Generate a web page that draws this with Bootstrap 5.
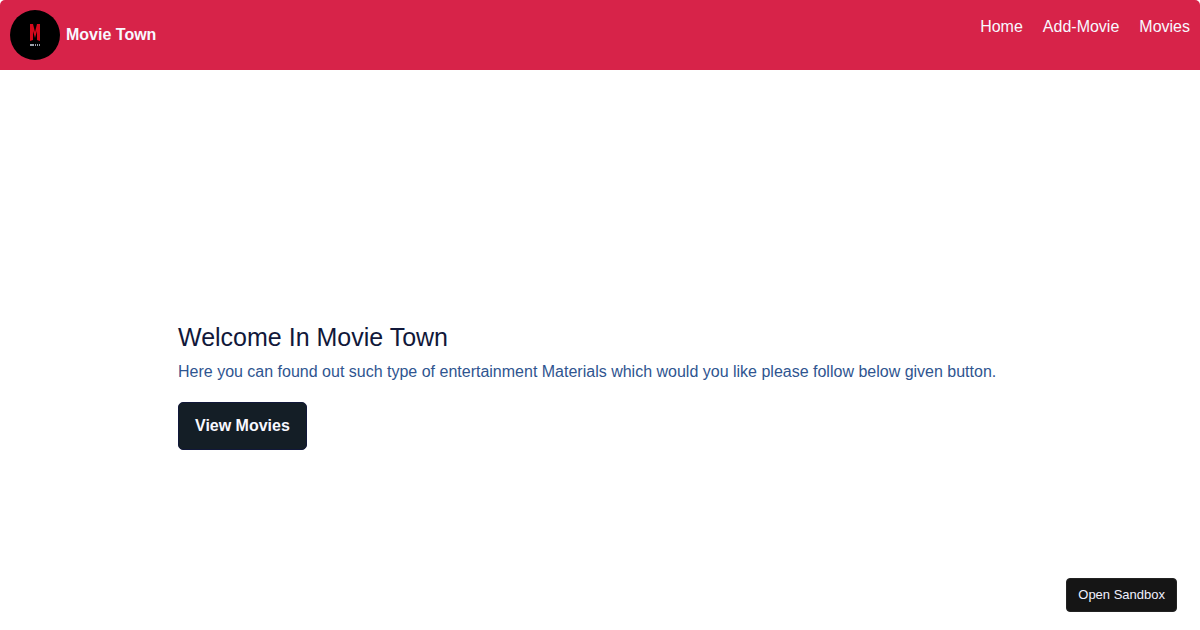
<!DOCTYPE html>
<html lang="en">
<head>
<meta charset="utf-8">
<meta name="viewport" content="width=device-width, initial-scale=1">
<title>Movie Town</title>
<link href="https://cdn.jsdelivr.net/npm/bootstrap@5.3.0/dist/css/bootstrap.min.css" rel="stylesheet">
<style>
body{font-family:"Liberation Sans",Arial,sans-serif;font-size:16px;line-height:24px;color:#11183a}
.site-bar{background:#d72349;border-radius:5px 5px 0 0;padding:10px}
.site-bar a{color:#f8f8ff}
.brand-link{gap:6px}
.main-nav{gap:20px;padding-top:5px}
.hero{padding-top:68px}
.welcome{width:100%;max-width:844px}
.welcome-title{font-size:25px;line-height:36px;margin-bottom:5px}
.welcome-text{color:#2f5590;margin-bottom:18px}
.btn-view{--bs-btn-bg:#141e26;--bs-btn-color:#f8f8ff;--bs-btn-border-color:#11183a;--bs-btn-hover-bg:#26323c;--bs-btn-hover-color:#fff;height:48px;padding:0 16px;border-radius:5px}
.btn-sandbox{--bs-btn-bg:#151515;--bs-btn-color:#f0f0ff;--bs-btn-border-color:#222;--bs-btn-hover-bg:#333;--bs-btn-hover-color:#fff;font-size:13px;line-height:16px;padding:8px 11px;border-radius:4px;right:23px;bottom:18px}
</style>
</head>
<body class="d-flex flex-column min-vh-100">
<header class="site-bar d-flex justify-content-between">
<a href="#" class="brand-link d-flex align-items-center text-decoration-none fw-bold">
<svg width="50" height="50" viewBox="0 0 50 50" aria-hidden="true"><circle cx="25" cy="25" r="25"/><path d="M20 14h3l2 8 2-8h3v17l-3-1v-9l-2 7-2-7v9l-3 1z" fill="#d5091c"/><path d="M20 34h4v2h-4zM25 34h1v2h-1zM27 34h1v2h-1zM29 34h1v2h-1z" fill="#9aa0aa"/></svg>
<span>Movie Town</span></a>
<nav class="main-nav d-flex align-items-start"><a class="text-decoration-none" href="#">Home</a><a class="text-decoration-none" href="#">Add-Movie</a><a class="text-decoration-none" href="#">Movies</a></nav>
</header>
<main class="hero flex-grow-1 d-flex align-items-center justify-content-center">
<section class="welcome">
<h1 class="welcome-title fw-normal">Welcome In Movie Town</h1>
<p class="welcome-text">Here you can found out such type of entertainment Materials which would you like please follow below given button.</p>
<button type="button" class="btn btn-view fw-bold">View Movies</button>
</section>
</main>
<button type="button" class="btn btn-sandbox position-fixed">Open Sandbox</button>
<script src="https://cdn.jsdelivr.net/npm/bootstrap@5.3.0/dist/js/bootstrap.bundle.min.js"></script>
</body>
</html>
